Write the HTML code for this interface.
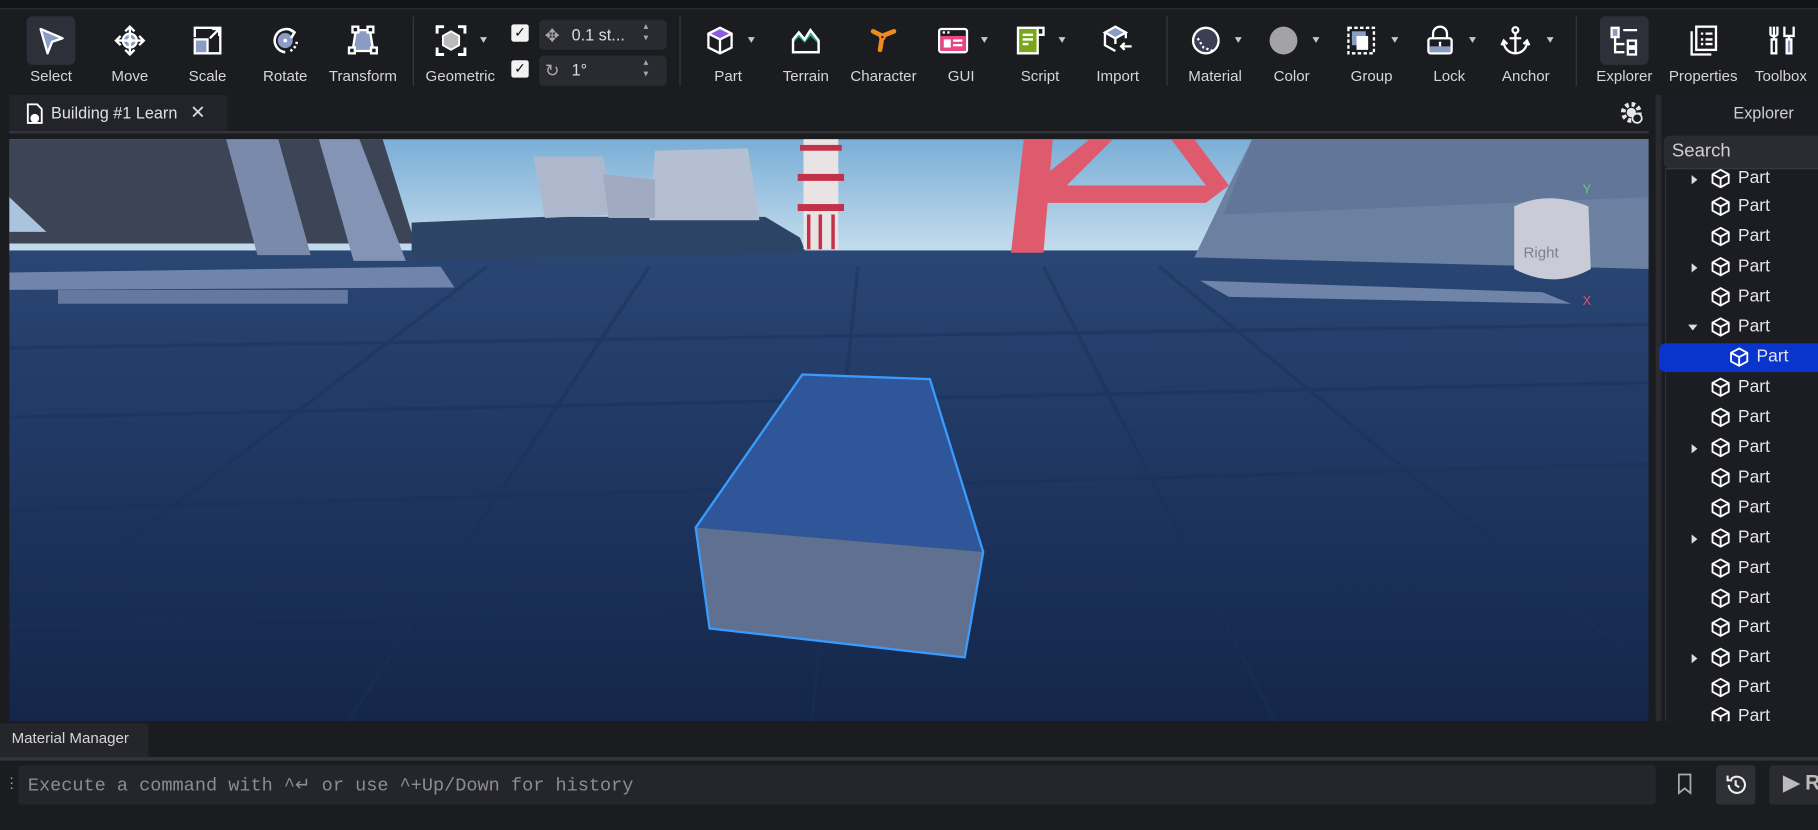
<!DOCTYPE html>
<html><head><meta charset="utf-8">
<style>
html,body{margin:0;padding:0;background:#17181c;overflow:hidden;width:1818px;height:830px}
#w{position:absolute;left:0;top:0;width:1568px;height:716px;transform:scale(1.15944);transform-origin:0 0;background:#1b1c20;font-family:"Liberation Sans",sans-serif;color:#d8d8dc}
.a{position:absolute}
.lbl{position:absolute;top:58px;font-size:13px;color:#d6d6da;transform:translateX(-50%);white-space:nowrap}
.ic{position:absolute;top:21px}
.dd{position:absolute;top:32px;width:0;height:0;border-left:3px solid transparent;border-right:3px solid transparent;border-top:5px solid #c8c8cc}
.sep{position:absolute;top:14px;width:1px;height:60px;background:#38393f}
.row{position:absolute;left:1431px;width:137px;height:25px;font-size:15px;color:#e6e6ea}
.row svg{position:absolute;left:44px;top:3px}
.row span{position:absolute;left:68px;top:3px}
.arr{position:absolute;left:28px;top:9px;width:0;height:0;border-top:4px solid transparent;border-bottom:4px solid transparent;border-left:5px solid #ddd}
.arrd{position:absolute;left:25px;top:10px;width:0;height:0;border-left:4px solid transparent;border-right:4px solid transparent;border-top:5px solid #ddd}
</style></head><body><div id="w">
<div class="a" style="left:0;top:0;width:1568px;height:7px;background:#131417"></div>
<div class="a" style="left:0;top:7px;width:1568px;height:1px;background:#2c2d33"></div>
<div class="a" style="left:23px;top:14px;width:42px;height:42px;background:#2e3039;border-radius:5px"></div>
<svg class="ic" style="left:30px;top:22px" width="28" height="28" viewBox="0 0 28 28"><path d="M5 3 L24 11 L15 14 L11 24 Z" fill="#8a9bc4" stroke="#fff" stroke-width="2" stroke-linejoin="round"/></svg>
<div class="lbl" style="left:44px">Select</div>
<svg class="ic" style="left:98px" width="28" height="28" viewBox="0 0 28 28" fill="none" stroke="#fff" stroke-width="2"><circle cx="14" cy="14" r="6" fill="#8a9bc4"/><path d="M14 2v24M2 14h24M10 6l4-4 4 4M10 22l4 4 4-4M6 10l-4 4 4 4M22 10l4 4-4 4"/><circle cx="14" cy="14" r="1.5" fill="#fff"/></svg>
<div class="lbl" style="left:112px">Move</div>
<svg class="ic" style="left:165px" width="28" height="28" viewBox="0 0 28 28" fill="none" stroke="#fff" stroke-width="2"><path d="M3 11V3h22v22H14"/><rect x="3" y="13" width="11" height="12" fill="#8a9bc4"/><path d="M16 12l8-8M18 4h6v6"/></svg>
<div class="lbl" style="left:179px">Scale</div>
<svg class="ic" style="left:232px" width="28" height="28" viewBox="0 0 28 28" fill="none" stroke="#fff" stroke-width="2.2"><circle cx="14" cy="14" r="6.5" fill="#8a9bc4" stroke="none"/><path d="M22 7A10 10 0 1 0 14 24"/><path d="M24 15a10 10 0 0 1-6 8" stroke-dasharray="2 2"/><path d="M17 4l5 3-3 5"/><circle cx="14" cy="14" r="1.6" fill="#fff" stroke="none"/></svg>
<div class="lbl" style="left:246px">Rotate</div>
<svg class="ic" style="left:299px" width="28" height="28" viewBox="0 0 28 28" fill="none" stroke="#fff" stroke-width="2"><path d="M8 5h12l3 18H5Z" fill="#8a9bc4"/><rect x="5" y="2" width="5" height="5" fill="#1b1c20"/><rect x="18" y="2" width="5" height="5" fill="#1b1c20"/><rect x="2" y="20" width="5" height="5" fill="#1b1c20"/><rect x="21" y="20" width="5" height="5" fill="#1b1c20"/></svg>
<div class="lbl" style="left:313px">Transform</div>
<div class="sep" style="left:356px"></div>
<svg class="ic" style="left:375px" width="28" height="28" viewBox="0 0 28 28" fill="none" stroke="#fff" stroke-width="2.5"><path d="M2 8V2h6M20 2h6v6M2 20v6h6M20 26h6v-6"/><path d="M14 6l7 4v8l-7 4-7-4v-8z" fill="#bbb" stroke-width="1.6"/></svg>
<div class="dd" style="left:414px"></div>
<div class="lbl" style="left:397px">Geometric</div>
<div class="a" style="left:441px;top:21px;width:15px;height:15px;background:#f2f2f2;border-radius:2px;color:#111;font-size:12px;text-align:center;line-height:15px">✓</div>
<div class="a" style="left:441px;top:52px;width:15px;height:15px;background:#f2f2f2;border-radius:2px;color:#111;font-size:12px;text-align:center;line-height:15px">✓</div>
<div class="a" style="left:465px;top:17px;width:110px;height:26px;background:#2a2b31;border-radius:4px"></div>
<div class="a" style="left:465px;top:48px;width:110px;height:26px;background:#2a2b31;border-radius:4px"></div>
<div class="a" style="left:470px;top:22px;font-size:15px;color:#aaa">✥</div>
<div class="a" style="left:493px;top:22px;font-size:14px;color:#ddd">0.1 st...</div>
<div class="a" style="left:470px;top:52px;font-size:15px;color:#aaa">↻</div>
<div class="a" style="left:493px;top:52px;font-size:14px;color:#ddd">1°</div>
<div class="a" style="left:555px;top:18px;font-size:8px;color:#aaa;line-height:10px">▴<br>▾</div>
<div class="a" style="left:555px;top:49px;font-size:8px;color:#aaa;line-height:10px">▴<br>▾</div>
<div class="sep" style="left:586px"></div>
<svg class="ic" style="left:607px" width="28" height="28" viewBox="0 0 28 28" stroke="#fff" stroke-width="2" stroke-linejoin="round"><path d="M14 3l10 5v12l-10 5-10-5V8z" fill="#1b1c20"/><path d="M14 3l10 5-10 5-10-5z" fill="#8f5ce0"/><path d="M14 13v12" fill="none"/></svg>
<div class="dd" style="left:645px"></div>
<div class="lbl" style="left:628px">Part</div>
<svg class="ic" style="left:681px" width="28" height="28" viewBox="0 0 28 28" fill="none" stroke="#fff" stroke-width="2"><path d="M3 24V13l5-6 5 6 5-8 7 9v10z" fill="#1fa882"/><path d="M3 16l5-5 5 5 5-6 7 7v7H3z" fill="#1b1c20" stroke="none"/><path d="M3 24V13l5-6 5 6 5-8 7 9v10z"/></svg>
<div class="lbl" style="left:695px">Terrain</div>
<svg class="ic" style="left:748px" width="28" height="28" viewBox="0 0 28 28" fill="none" stroke="#f08a1c" stroke-width="4" stroke-linecap="round"><path d="M5 6l8 4M13 10l-2 12M13 10l10-4"/><circle cx="13" cy="11" r="2" fill="#1b1c20" stroke-width="2"/></svg>
<div class="lbl" style="left:762px">Character</div>
<svg class="ic" style="left:808px" width="28" height="28" viewBox="0 0 28 28"><rect x="2" y="4" width="24" height="20" rx="2" fill="#1b1c20" stroke="#fff" stroke-width="2"/><rect x="3" y="10" width="22" height="13" fill="#e9457e"/><rect x="6" y="13" width="6" height="7" fill="#fff"/><rect x="14" y="13" width="8" height="2" fill="#fff"/><rect x="14" y="17" width="8" height="2" fill="#fff"/><rect x="5" y="6" width="2" height="2" fill="#fff"/><rect x="9" y="6" width="2" height="2" fill="#fff"/></svg>
<div class="dd" style="left:846px"></div>
<div class="lbl" style="left:829px">GUI</div>
<svg class="ic" style="left:875px" width="28" height="28" viewBox="0 0 28 28"><path d="M3 3h17v22H3z" fill="#7aa61c"/><path d="M20 3h5v6h-5" fill="none" stroke="#fff" stroke-width="2"/><path d="M3 3h17v22H3z" fill="none" stroke="#fff" stroke-width="2"/><path d="M7 9h9M7 13h9M7 17h5" stroke="#fff" stroke-width="2"/></svg>
<div class="dd" style="left:913px"></div>
<div class="lbl" style="left:897px">Script</div>
<svg class="ic" style="left:950px" width="28" height="28" viewBox="0 0 28 28" fill="none" stroke="#fff" stroke-width="2"><path d="M12 2l9 5-9 5-9-5z" fill="#8a9bc4"/><path d="M3 7v11l9 5M21 7v5M12 12v5"/><path d="M26 19h-9M20 16l-3 3 3 3"/></svg>
<div class="lbl" style="left:964px">Import</div>
<div class="sep" style="left:1006px"></div>
<svg class="ic" style="left:1026px" width="28" height="28" viewBox="0 0 28 28" fill="none" stroke="#fff" stroke-width="2"><circle cx="14" cy="14" r="11" fill="#3a3f55"/><path d="M7 12l5 8 8 3" stroke-dasharray="2 2"/></svg>
<div class="dd" style="left:1065px"></div>
<div class="lbl" style="left:1048px">Material</div>
<svg class="ic" style="left:1093px" width="28" height="28"><circle cx="14" cy="14" r="12" fill="#a3a3a6"/></svg>
<div class="dd" style="left:1132px"></div>
<div class="lbl" style="left:1114px">Color</div>
<svg class="ic" style="left:1160px" width="28" height="28" viewBox="0 0 28 28" fill="none" stroke="#fff" stroke-width="2"><rect x="3" y="3" width="22" height="22" stroke-dasharray="3 2"/><rect x="6" y="6" width="12" height="12" fill="#8a9bc4" stroke="none"/><rect x="10" y="10" width="10" height="12" fill="#fff" stroke="none"/></svg>
<div class="dd" style="left:1200px"></div>
<div class="lbl" style="left:1183px">Group</div>
<svg class="ic" style="left:1228px" width="28" height="28" viewBox="0 0 28 28" fill="none" stroke="#fff" stroke-width="2"><path d="M8 12V8a6 6 0 0 1 12 0v4"/><rect x="4" y="12" width="20" height="13" rx="2" fill="#1b1c20"/><path d="M5 19h18v5H5z" fill="#8a9bc4" stroke="none"/><path d="M14 15v4"/></svg>
<div class="dd" style="left:1267px"></div>
<div class="lbl" style="left:1250px">Lock</div>
<svg class="ic" style="left:1293px" width="28" height="28" viewBox="0 0 28 28" fill="none" stroke="#fff" stroke-width="2"><circle cx="14" cy="5" r="2.5"/><path d="M14 8v17M9 12h10M4 15a10 10 0 0 0 20 0M2 18l2-4 3 3M26 18l-2-4-3 3"/></svg>
<div class="dd" style="left:1334px"></div>
<div class="lbl" style="left:1316px">Anchor</div>
<div class="sep" style="left:1359px"></div>
<div class="a" style="left:1380px;top:14px;width:42px;height:42px;background:#2e3039;border-radius:5px"></div>
<svg class="ic" style="left:1387px" width="28" height="28" viewBox="0 0 28 28" fill="none" stroke="#fff" stroke-width="2"><rect x="3" y="3" width="6" height="8" fill="#8a9bc4"/><path d="M13 5h12M6 11v13h8M6 17h8"/><rect x="17" y="14" width="7" height="5"/><rect x="17" y="21" width="7" height="5"/></svg>
<div class="lbl" style="left:1401px">Explorer</div>
<svg class="ic" style="left:1455px" width="28" height="28" viewBox="0 0 28 28" fill="none" stroke="#fff" stroke-width="2"><rect x="8" y="2" width="17" height="20"/><path d="M4 6v20h17"/><path d="M12 8h2M16 8h6M12 13h2M16 13h6M12 17h2M16 17h6"/></svg>
<div class="lbl" style="left:1469px">Properties</div>
<svg class="ic" style="left:1522px" width="28" height="28" viewBox="0 0 28 28" fill="none" stroke="#fff" stroke-width="2"><path d="M8 2v10M5 2v6M11 2v6M5 8c0 3 6 3 6 0M6 13h4v12H6z"/><path d="M17 2v8h8V2M21 10v15"/><rect x="19" y="13" width="4" height="12" fill="#8a9bc4"/></svg>
<div class="lbl" style="left:1536px">Toolbox</div>
<div class="a" style="left:8px;top:82px;width:188px;height:32px;background:#232429"></div>
<svg class="a" style="left:22px;top:89px" width="16" height="18" viewBox="0 0 16 18" fill="none" stroke="#fff" stroke-width="1.6"><path d="M2 1h8l4 4v12H2z"/><circle cx="8" cy="13" r="3" fill="#fff"/></svg>
<div class="a" style="left:44px;top:89px;font-size:14px;color:#e0e0e4">Building #1 Learn</div>
<div class="a" style="left:164px;top:87px;font-size:16px;color:#ddd">✕</div>
<div class="a" style="left:8px;top:113px;width:1414px;height:2px;background:#34353b"></div>
<svg class="a" style="left:1397px;top:87px" width="22" height="22" viewBox="0 0 22 22"><circle cx="10" cy="10" r="7" fill="none" stroke="#e6e6e6" stroke-width="4" stroke-dasharray="3 2.5"/><circle cx="10" cy="10" r="4" fill="#e6e6e6"/><circle cx="15" cy="15" r="4" fill="#1b1c20" stroke="#e6e6e6" stroke-width="1.5"/></svg>
<svg class="a" style="left:8px;top:120px" width="1414" height="502" viewBox="8 120 1414 502">
<defs>
<linearGradient id="sky" x1="0" y1="0" x2="0" y2="1"><stop offset="0" stop-color="#7aaed6"/><stop offset="1" stop-color="#c6deed"/></linearGradient>
<linearGradient id="gr" x1="0" y1="0" x2="0" y2="1"><stop offset="0" stop-color="#2a4673"/><stop offset="0.35" stop-color="#213a66"/><stop offset="1" stop-color="#142649"/></linearGradient>
</defs>
<rect x="8" y="120" width="1414" height="100" fill="url(#sky)"/>
<rect x="8" y="216" width="1414" height="406" fill="url(#gr)"/>
<g stroke="#18305a" stroke-width="3" opacity="0.45" fill="none">
<path d="M8 300L1422 280M8 360L1422 330M8 440L1422 400M8 540L1422 500M300 622L560 230M700 622L740 230M1100 622L900 230M40 520L420 230M1400 560L1000 230"/>
</g>
<path d="M8 120H330L358 210H8Z" fill="#3c4455"/>
<path d="M195 120H240L268 220H222Z" fill="#7a8aab"/>
<path d="M275 120H310L350 225H305Z" fill="#8494b4"/>
<path d="M8 170L40 200H8Z" fill="#a9c4dc"/>
<path d="M8 235L380 230L392 248L8 250Z" fill="#7185aa"/>
<path d="M50 250H300V262H50Z" fill="#6579a0"/>
<path d="M355 192L470 187L660 187L690 205L695 218L355 225Z" fill="#2d4466"/>
<path d="M460 135L520 135L530 185L470 188Z" fill="#aeb8cc"/>
<path d="M565 130L645 128L655 190L560 190Z" fill="#b5bfd2"/>
<path d="M520 150L565 155L565 188L525 188Z" fill="#a0abc2"/>
<rect x="693" y="120" width="30" height="95" fill="#e9e4e4"/>
<g fill="#c2304a"><rect x="690" y="125" width="36" height="5"/><rect x="688" y="150" width="40" height="6"/><rect x="688" y="176" width="40" height="6"/><rect x="696" y="185" width="3" height="30"/><rect x="717" y="185" width="3" height="30"/><rect x="706" y="185" width="3" height="30"/></g>
<path d="M883 120H908L900 218H872Z" fill="#e05a6d"/>
<path d="M905 148L940 120H960L920 160H1040L1010 120H1030L1060 160L1040 175H900Z" fill="#e05a6d"/>
<path d="M1080 120H1422V232L1030 222L1060 160Z" fill="#6c80a2"/>
<path d="M1080 120H1422V170L1055 185Z" fill="#62769a"/>
<path d="M1035 242L1330 252L1355 262L1060 256Z" fill="#6f84a8"/>
<path d="M1306 178Q1335 164 1370 178L1372 232Q1340 250 1306 232Z" fill="#c9ccd6"/>
<text x="1314" y="222" font-size="13" fill="#7d8090" font-family="Liberation Sans">Right</text>
<text x="1365" y="167" font-size="11" fill="#5fd07f" font-family="Liberation Sans">Y</text>
<text x="1365" y="263" font-size="11" fill="#e0506a" font-family="Liberation Sans">X</text>
<path d="M692 323L802 327L848 476L600 455Z" fill="#2f5699"/>
<path d="M600 455L848 476L832 567L612 542Z" fill="#5f7090"/>
<path d="M692 323L802 327L848 476L832 567L612 542L600 455Z" fill="none" stroke="#3a9bff" stroke-width="2"/>
</svg>
<div class="a" style="left:1422px;top:114px;width:8px;height:510px;background:#1b1c20"></div>
<div class="a" style="left:1428px;top:82px;width:5px;height:540px;background:#2a2b31"></div>
<div class="a" style="left:1433px;top:82px;width:135px;height:540px;background:#1c1d22"></div>
<div class="a" style="left:1495px;top:89px;font-size:14px;color:#cfcfd4">Explorer</div>
<div class="a" style="left:1435px;top:117px;width:140px;height:28px;background:#2b2c32;border-radius:5px"></div>
<div class="a" style="left:1442px;top:122px;font-size:16px;color:#cfcfd4">Search</div>
<div class="a" style="left:1436px;top:145px;width:132px;height:1px;background:#3a3b41"></div>
<div class="a" style="left:1436px;top:146px;width:1px;height:476px;background:#2e2f35"></div>
<div class="row" style="top:296px;background:#0a35cc;border-radius:6px 0 0 6px"></div>
<div id="rows"></div>
<div class="a" style="left:0;top:622px;width:1568px;height:94px;background:#1b1c20"></div>
<div class="a" style="left:0;top:624px;width:128px;height:29px;background:#25262b"></div>
<div class="a" style="left:10px;top:629px;font-size:13px;color:#d6d6da">Material Manager</div>
<div class="a" style="left:0;top:653px;width:1568px;height:3px;background:#34353b"></div>
<div class="a" style="left:4px;top:668px;font-size:12px;color:#aaa">⋮</div>
<div class="a" style="left:16px;top:660px;width:1412px;height:34px;background:#25262b;border-radius:3px"></div>
<div class="a" style="left:24px;top:667px;font-family:'Liberation Mono',monospace;font-size:16px;color:#8c8c92;white-space:nowrap">Execute a command with ^↵ or use ^+Up/Down for history</div>
<svg class="a" style="left:1446px;top:666px" width="14" height="20" fill="none" stroke="#aaa" stroke-width="1.5"><path d="M2 2h10v16l-5-4-5 4z"/></svg>
<div class="a" style="left:1480px;top:660px;width:34px;height:34px;background:#2f3036;border-radius:3px"></div>
<svg class="a" style="left:1487px;top:667px" width="20" height="20" fill="none" stroke="#eee" stroke-width="1.8"><path d="M4 10a7 7 0 1 0 2-5M3 2v4h4M10 6v4l3 2"/></svg>
<div class="a" style="left:1526px;top:660px;width:50px;height:34px;background:#2a2b31;border-radius:3px"></div>
<div class="a" style="left:1538px;top:665px;font-size:18px;color:#bbb;font-weight:bold;white-space:nowrap">▶ R</div>
<script>
var ys=[153,177,203,229,255,281,307,333,359,385,411,437,463,489,515,540,566,592,617];
var arr={153:1,229:1,385:1,463:1,566:1},dn={281:1};
var h='';
ys.forEach(function(y){
var sel=y==307;
var off=sel?16:0;
var cube='<svg style="left:'+(44+off)+'px" width="18" height="18" viewBox="0 0 18 18" fill="none" stroke="#fff" stroke-width="1.6" stroke-linejoin="round"><path d="M9 1.5l7 3.8v7.4L9 16.5 2 12.7V5.3z"/><path d="M2 5.3L9 9l7-3.7M9 9v7.5"/></svg>';
h+='<div class="row" style="top:'+(y-11)+'px">'+(arr[y]?'<div class="arr"></div>':'')+(dn[y]?'<div class="arrd"></div>':'')+cube+'<span style="left:'+(68+off)+'px">Part</span></div>';
});
document.getElementById('rows').innerHTML=h;
</script>
</div></body></html>
